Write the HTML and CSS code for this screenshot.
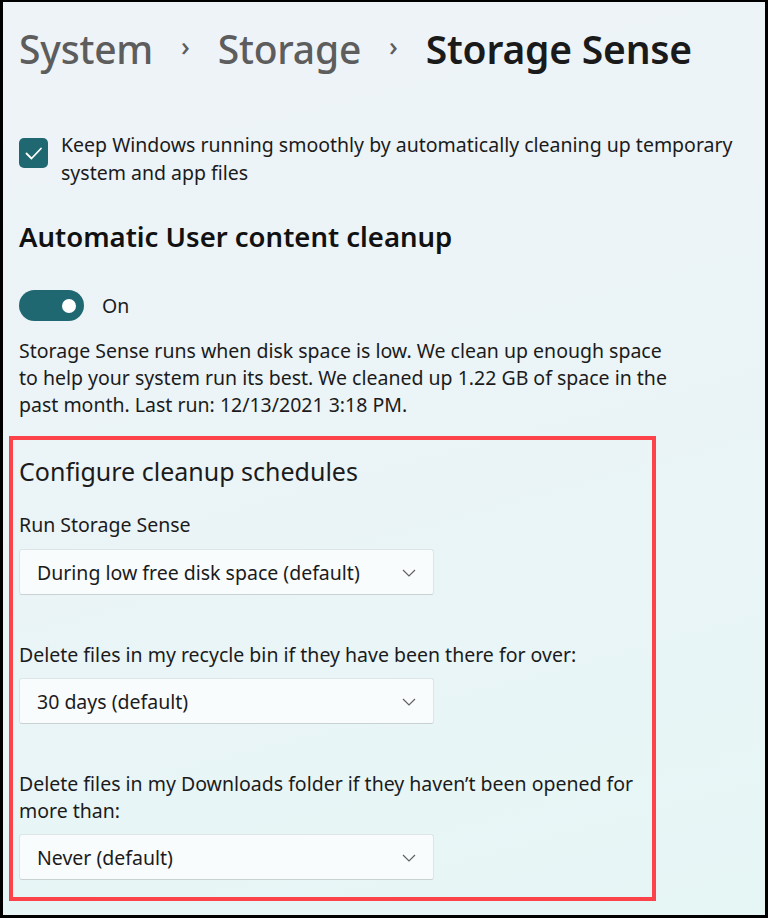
FILE: index.html
```html
<!DOCTYPE html>
<html>
<head>
<meta charset="utf-8">
<link rel="stylesheet" href="styles.css">
</head>
<body>
<div class="frame">
  <div class="panel">
    <div class="crumbs">
      <span class="crumb">System</span>
      <span class="sep">&#x203A;</span>
      <span class="crumb">Storage</span>
      <span class="sep">&#x203A;</span>
      <span class="crumb current">Storage Sense</span>
    </div>

    <div class="check-row">
      <span class="checkbox">
        <svg width="29" height="30" viewBox="0 0 29 30"><path d="M7.5 15.5 L12.5 20.5 L22 10.5" fill="none" stroke="#fff" stroke-width="1.8" stroke-linecap="round" stroke-linejoin="round"/></svg>
      </span>
      <p class="check-text">Keep Windows running smoothly by automatically cleaning up temporary system and app files</p>
    </div>

    <h2 class="heading">Automatic User content cleanup</h2>

    <div class="toggle-row">
      <span class="toggle"><span class="knob"></span></span>
      <span class="toggle-label">On</span>
    </div>

    <p class="desc">Storage Sense runs when disk space is low. We clean up enough space to help your system run its best. We cleaned up 1.22 GB of space in the past month. Last run: 12/13/2021 3:18 PM.</p>

    <section class="schedules">
      <h3 class="sub">Configure cleanup schedules</h3>

      <div class="field first">
        <div class="label">Run Storage Sense</div>
        <div class="select"><span>During low free disk space (default)</span>
          <svg class="chev" width="14" height="8" viewBox="0 0 14 8"><path d="M1 1 L7 7 L13 1" fill="none" stroke="#616161" stroke-width="1.2"/></svg>
        </div>
      </div>

      <div class="field">
        <div class="label">Delete files in my recycle bin if they have been there for over:</div>
        <div class="select"><span>30 days (default)</span>
          <svg class="chev" width="14" height="8" viewBox="0 0 14 8"><path d="M1 1 L7 7 L13 1" fill="none" stroke="#616161" stroke-width="1.2"/></svg>
        </div>
      </div>

      <div class="field">
        <div class="label">Delete files in my Downloads folder if they haven’t been opened for more than:</div>
        <div class="select"><span>Never (default)</span>
          <svg class="chev" width="14" height="8" viewBox="0 0 14 8"><path d="M1 1 L7 7 L13 1" fill="none" stroke="#616161" stroke-width="1.2"/></svg>
        </div>
      </div>
    </section>
  </div>
</div>
</body>
</html>
```

FILE: styles.css
```css
* { box-sizing: border-box; }
html, body { margin: 0; padding: 0; }
body {
  width: 768px;
  height: 918px;
  background: #000;
  font-family: "Noto Sans", "Open Sans", sans-serif;
  color: #1b1b1b;
  overflow: hidden;
}
.frame {
  width: 768px;
  height: 918px;
  border-style: solid;
  border-color: #000;
  border-width: 2px 3px 3px 3px;
}
.panel {
  height: 100%;
  background: linear-gradient(165deg, #eef3f8 0%, #ebf4f7 45%, #e6f6f5 100%);
  padding: 22px 0 0 16px;
}
.crumbs {
  display: flex;
  align-items: center;
  height: 48px;
  font-size: 39px;
  font-weight: 500;
  color: #5d5d5d;
  letter-spacing: -0.2px;
}
.sep {
  font-size: 27px;
  margin: 0 28px 0 28px;
  color: #5d5d5d;
  position: relative;
  top: -3px;
}
.current { color: #1a1a1a; font-weight: 600; }

.check-row {
  display: flex;
  align-items: flex-start;
  margin-top: 59px;
}
.checkbox {
  flex: none;
  width: 29px;
  height: 30px;
  border-radius: 5px;
  background: #1f6871;
  margin-top: 7px;
  margin-right: 13px;
  display: flex;
}
.check-text {
  margin: 0;
  font-size: 19.5px;
  line-height: 28px;
  width: 690px;
}
.heading {
  margin: 32px 0 0 0;
  font-size: 27.5px;
  line-height: 36px;
  font-weight: 600;
  color: #111;
}
.toggle-row {
  display: flex;
  align-items: center;
  margin-top: 35px;
  height: 31px;
}
.toggle {
  width: 65px;
  height: 31px;
  border-radius: 16px;
  background: #1f6871;
  display: flex;
  align-items: center;
  justify-content: flex-end;
  padding-right: 8px;
}
.knob {
  width: 14px;
  height: 14px;
  border-radius: 50%;
  background: #fff;
}
.toggle-label {
  margin-left: 18px;
  font-size: 19.5px;
}
.desc {
  margin: 16px 0 0 0;
  font-size: 19.5px;
  line-height: 27px;
  width: 662px;
}
.schedules {
  margin: 18px 0 0 -10px;
  width: 647px;
  border: 4px solid #fd434a;
  padding: 15px 0 17px 6px;
}
.sub {
  margin: 0;
  font-size: 25px;
  line-height: 32px;
  font-weight: 400;
}
.field { margin-top: 46px; }
.field.first { margin-top: 24px; }
.label {
  font-size: 19.5px;
  line-height: 27px;
  width: 630px;
}
.select {
  margin-top: 10px;
  width: 415px;
  height: 46px;
  background: #f9fcfd;
  border: 1px solid #dde5e7;
  border-bottom-color: #c9d1d3;
  border-radius: 3px;
  display: flex;
  align-items: center;
  justify-content: space-between;
  padding: 0 17px 0 17px;
  font-size: 19.5px;
}
.field.first .select { margin-top: 11px; }
.chev { margin-top: 1px; }
```
